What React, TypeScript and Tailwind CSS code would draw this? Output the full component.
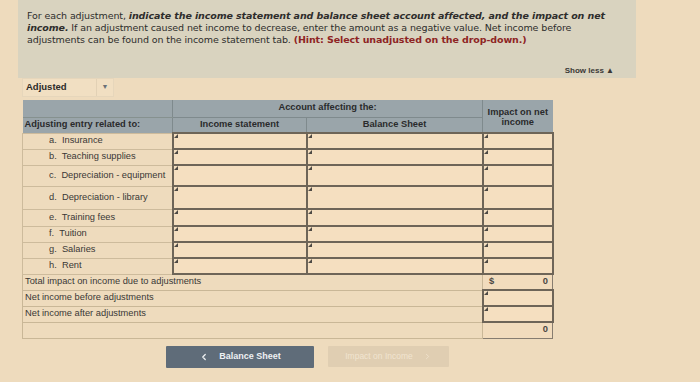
import { ChevronLeft, ChevronRight } from 'lucide-react';

const rows = [
  { label: 'a.  Insurance', h: 'h-[16px]' },
  { label: 'b.  Teaching supplies', h: 'h-[16px]' },
  { label: 'c.  Depreciation - equipment', h: 'h-[21px]' },
  { label: 'd.  Depreciation - library', h: 'h-[23px]' },
  { label: 'e.  Training fees', h: 'h-[17px]' },
  { label: 'f.  Tuition', h: 'h-[16px]' },
  { label: 'g.  Salaries', h: 'h-[16px]' },
  { label: 'h.  Rent', h: 'h-[16px]' },
];

function InputCell({ className = '' }: { className?: string }) {
  return (
    <td className={`relative border-2 border-[#6e6558] bg-[#f5dfc0] ${className}`}>
      <span className="absolute left-0 top-0 h-0 w-0 border-l-[4px] border-t-[4px] border-l-transparent border-t-[#4e4a45] rotate-90" />
    </td>
  );
}

export default function App() {
  return (
    <div
      className="w-[700px] h-[382px] overflow-hidden bg-[#eedbbd] text-[#2f2d2b]"
      style={{ fontFamily: '"Liberation Sans", Arial, sans-serif' }}
    >
      {/* Consignes */}
      <div className="ml-[18px] w-[618px] h-[78px] bg-[#d9d3bf] pl-[9px] pt-[10px] pr-2">
        <p
          className="text-[9.5px] leading-[12px] text-[#2e2d2c] tracking-[-0.1px]"
          style={{ fontFamily: '"DejaVu Sans", Verdana, sans-serif' }}
        >
          For each adjustment, <b><i>indicate the income statement and balance sheet account affected, and the impact on net income.</i></b> If an
          adjustment caused net income to decrease, enter the amount as a negative value. Net income before adjustments can be
          found on the income statement tab.{' '}
          <b className="text-[#8e2424]">(Hint: Select unadjusted on the drop-down.)</b>
        </p>
        <div className="mt-[19px] flex justify-end pr-[14px] text-[8px] font-bold text-[#3a3835]">
          Show less ▲
        </div>
      </div>

      {/* Sélecteur */}
      <div className="ml-[22px] flex h-[19px] w-[92px] items-center border border-[#e6d6bb] bg-[#f1dfc2]">
        <span className="flex-1 pl-[3px] text-[9.5px] font-bold text-[#2b2a28]">Adjusted</span>
        <span className="flex h-full w-[17px] items-center justify-center border-l border-[#e2d1b5] text-[7px] text-[#6a7077]">▼</span>
      </div>

      {/* Tableau */}
      <table className="ml-[22px] mt-[3px] w-[530px] table-fixed border-collapse text-[9.3px]">
        <colgroup>
          <col className="w-[150px]" />
          <col className="w-[134px]" />
          <col className="w-[176px]" />
          <col className="w-[70px]" />
        </colgroup>
        <thead>
          <tr className="h-[17px] bg-[#9aa5aa] text-[#2a2b2c] font-bold">
            <th className="border-b border-[#86918f]" />
            <th colSpan={2} className="border-l border-b border-[#7f8a8d] text-center font-bold">
              Account affecting the:
            </th>
            <th rowSpan={2} className="border-l border-[#7f8a8d] pt-[7px] align-top text-center font-bold leading-[10px]">
              Impact on net income
            </th>
          </tr>
          <tr className="h-[16px] bg-[#9aa5aa] text-[#2a2b2c]">
            <th className="pl-[2px] text-left font-bold">Adjusting entry related to:</th>
            <th className="border-l border-[#7f8a8d] text-center font-bold">Income statement</th>
            <th className="border-l border-[#7f8a8d] text-center font-bold">Balance Sheet</th>
          </tr>
        </thead>
        <tbody>
          {rows.map((r) => (
            <tr key={r.label} className={r.h}>
              <td className="border border-[#cdbb9c] pl-[26px] whitespace-pre text-[#3a3836]">{r.label}</td>
              <InputCell />
              <InputCell />
              <InputCell />
            </tr>
          ))}
          <tr className="h-[16px]">
            <td colSpan={3} className="border border-[#c9b797] pl-[2px] text-[#3a3836]">
              Total impact on income due to adjustments
            </td>
            <td className="border border-[#877d70] bg-[#f2dcbd] px-[4px]">
              <div className="flex justify-between font-bold text-[#4a4742]">
                <span className="pl-[2px]">$</span>
                <span>0</span>
              </div>
            </td>
          </tr>
          <tr className="h-[16px]">
            <td colSpan={3} className="border border-[#c9b797] pl-[2px] text-[#3a3836]">
              Net income before adjustments
            </td>
            <InputCell />
          </tr>
          <tr className="h-[16px]">
            <td colSpan={3} className="border border-[#c9b797] pl-[2px] text-[#3a3836]">
              Net income after adjustments
            </td>
            <InputCell />
          </tr>
          <tr className="h-[16px]">
            <td colSpan={3} className="border border-[#c9b797]" />
            <td className="border border-[#877d70] bg-[#f2dcbd] px-[4px] text-right font-bold text-[#4a4742]">0</td>
          </tr>
        </tbody>
      </table>

      {/* Navigation */}
      <div className="mt-[7px] flex gap-[14px] pl-[166px]">
        <button
          type="button"
          className="flex h-[22px] w-[148px] items-center justify-center gap-[10px] rounded-[1px] bg-[#5f6c79] text-[9px] font-bold text-[#eef0f2]"
        >
          <ChevronLeft size={10} strokeWidth={3} />
          Balance Sheet
        </button>
        <button
          type="button"
          className="flex h-[21px] w-[121px] items-center justify-center gap-[10px] rounded-[1px] bg-[#e0ceb2] text-[8.5px] text-[#f1e4d0]"
        >
          Impact on Income
          <ChevronRight size={9} strokeWidth={2} />
        </button>
      </div>
    </div>
  );
}
